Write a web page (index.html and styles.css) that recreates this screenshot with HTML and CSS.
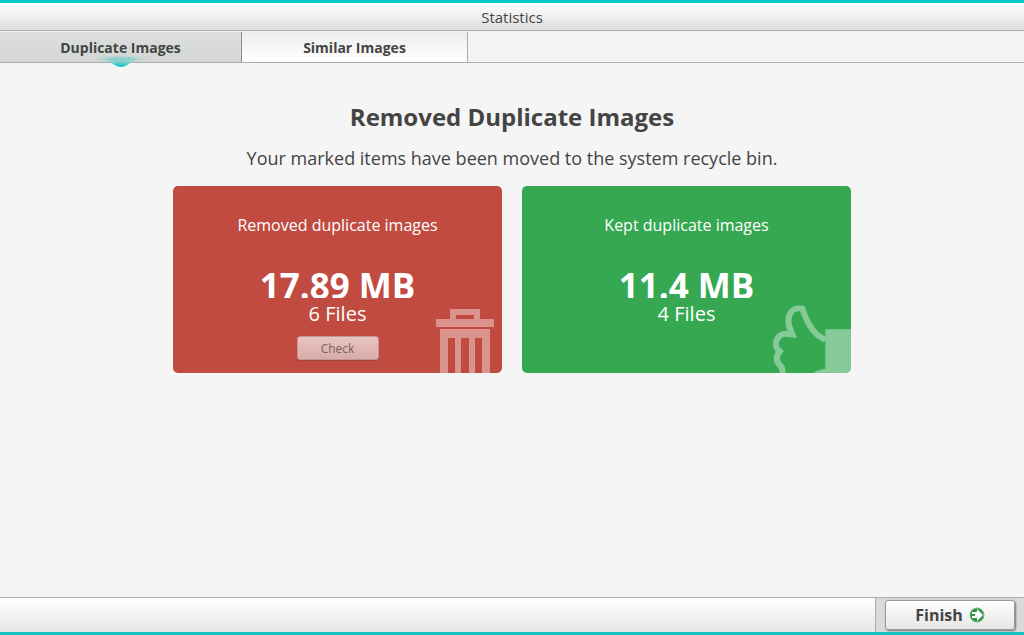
FILE: index.html
```html
<!DOCTYPE html>
<html lang="en">
<head>
    <meta charset="UTF-8">
    <meta name="viewport" content="width=device-width, initial-scale=1.0">
    <title>Statistics</title>
    <link rel="stylesheet" href="styles.css">
</head>
<body>
    <header class="titlebar">Statistics</header>

    <nav class="tabs">
        <button type="button" class="tab active">Duplicate Images
            <svg class="tab-marker" width="60" height="12" viewBox="0 0 60 12">
                <defs>
                    <radialGradient id="glow" cx="50%" cy="90%" r="50%">
                        <stop offset="0" stop-color="#10c4c4"/>
                        <stop offset="1" stop-color="#8fd0cf"/>
                    </radialGradient>
                    <radialGradient id="halo">
                        <stop offset="0" stop-color="#8fd0cf"/>
                        <stop offset="1" stop-color="#8fd0cf" stop-opacity="0"/>
                    </radialGradient>
                </defs>
                <ellipse fill="url(#halo)" cx="30" cy="4" rx="28" ry="4"/>
                <path fill="url(#glow)" d="M14 4Q30 0 46 4C39 7 36 12 30 12S21 7 14 4Z"/>
            </svg>
        </button>
        <button type="button" class="tab">Similar Images</button>
    </nav>

    <main class="content">
        <h1>Removed Duplicate Images</h1>
        <p class="message">Your marked items have been moved to the system recycle bin.</p>

        <div class="cards">
            <section class="card removed">
                <h2>Removed duplicate images</h2>
                <div class="size">17.89 MB</div>
                <div class="files">6 Files</div>
                <button type="button" class="check">Check</button>
                <svg class="card-icon trash" width="58" height="64" viewBox="0 0 58 64">
                    <path fill="#fff" fill-rule="evenodd" d="M14 0H44V10H58V18H0V10H14ZM20 6V10H38V6ZM4 20H54V64H46V29H39V64H33V29H25V64H19V29H12V64H4Z"/>
                </svg>
            </section>

            <section class="card kept">
                <h2>Kept duplicate images</h2>
                <div class="size">11.4 MB</div>
                <div class="files">4 Files</div>
                <svg class="card-icon thumb" width="78" height="68" viewBox="0 0 234 204">
                    <path fill="none" stroke="#fff" stroke-width="18" d="M28 210C30 198 28 188 22 182C8 168 9 153 20 139C-2 124 10 84 42 86L58 88C50 68 42 54 49 31C55 13 72 8 88 11C99 42 116 88 157 104"/>
                    <path fill="#fff" d="M157 73H234V204H121Q137 193 157 192Z"/>
                </svg>
            </section>
        </div>
    </main>

    <footer class="footer">
        <div class="footer-action">
            <button type="button" class="finish">Finish
                <svg width="16" height="16" viewBox="0 0 16 16">
                    <circle cx="8" cy="8" r="7" fill="#2f9444" stroke="#7db488"/>
                    <path fill="#fff" d="M3 5H8V2L14 8L8 14V11H3V9H6V7H3Z"/>
                </svg>
            </button>
        </div>
    </footer>
</body>
</html>
```

FILE: styles.css
```css
* {
    box-sizing: border-box;
}

body {
    font-family: "Open Sans", "Noto Sans", sans-serif;
    display: flex;
    flex-direction: column;
    min-height: 100vh;
    margin: 0;
    color: #444;
    background-color: #f5f5f5;
    border-top: 3px solid #06c6c6;
    border-bottom: 3px solid #14c3c1;
}

button {
    font-family: inherit;
    color: inherit;
    cursor: pointer;
}

.titlebar {
    height: 28px;
    line-height: 29px;
    font-size: 15px;
    text-align: center;
    background: linear-gradient(#fff, #dcdedd);
    border-bottom: 1px solid #a9adab;
}

.tabs {
    display: flex;
    height: 32px;
    padding-top: 1px;
    background-color: #f3f3f3;
    border-bottom: 1px solid #aaadac;
}

.tab {
    position: relative;
    width: 226px;
    padding: 0;
    font-size: 14px;
    font-weight: bold;
    background: linear-gradient(#ececec, #fff);
    border: none;
    border-right: 1px solid #aaadac;
}

.tab.active {
    width: 242px;
    background: linear-gradient(#dcdfdd, #d3d6d5);
    border-right-color: #8b8e8d;
}

.tab-marker {
    position: absolute;
    left: 50%;
    bottom: -5px;
    margin-left: -30px;
}

.content {
    flex: 1;
    padding: 36px 0 24px;
    text-align: center;
}

h1 {
    margin: 0;
    font-size: 24px;
    line-height: 36px;
}

.message {
    margin: 8px 0 12px;
    font-size: 18px;
    line-height: 31px;
}

.cards {
    display: flex;
    justify-content: center;
    gap: 20px;
}

.card {
    position: relative;
    width: 329px;
    min-height: 187px;
    padding: 24px 0 12px;
    color: #fff;
    border-radius: 5px;
    overflow: hidden;
}

.removed {
    background-color: #c14b41;
}

.kept {
    background-color: #36a852;
}

.card h2 {
    margin: 0 0 24px;
    font-size: 16px;
    font-weight: normal;
    line-height: 30px;
}

.size {
    height: 34px;
    font-size: 35px;
    font-weight: bold;
    line-height: 44px;
    overflow: hidden;
}

.files {
    font-size: 20px;
    line-height: 32px;
}

.check {
    width: 82px;
    height: 24px;
    margin-top: 6px;
    padding: 0;
    font-size: 12px;
    color: #7c5f5c;
    background: linear-gradient(#e8c4c1, #d8aca8);
    border: 1px solid #c69591;
    border-radius: 3px;
    box-shadow: 0 1px 1px #a0443c;
}

.card-icon {
    position: absolute;
    bottom: 0;
    opacity: 0.4;
}

.trash {
    right: 8px;
}

.thumb {
    right: 0;
}

.footer {
    display: flex;
    justify-content: flex-end;
    height: 35px;
    background: linear-gradient(#fff, #e6e6e6);
    border-top: 1px solid #a9adab;
}

.footer-action {
    padding: 2px 9px 2px 9px;
    background-color: #d9dbda;
    border-left: 1px solid #a9adab;
}

.finish {
    display: flex;
    align-items: center;
    justify-content: center;
    gap: 6px;
    width: 130px;
    height: 30px;
    padding: 0;
    font-size: 16px;
    font-weight: bold;
    background: linear-gradient(#fff, #e6e6e6);
    border: 1px solid #999;
    border-radius: 3px;
    box-shadow: 1px 1px 2px #777;
}
```
